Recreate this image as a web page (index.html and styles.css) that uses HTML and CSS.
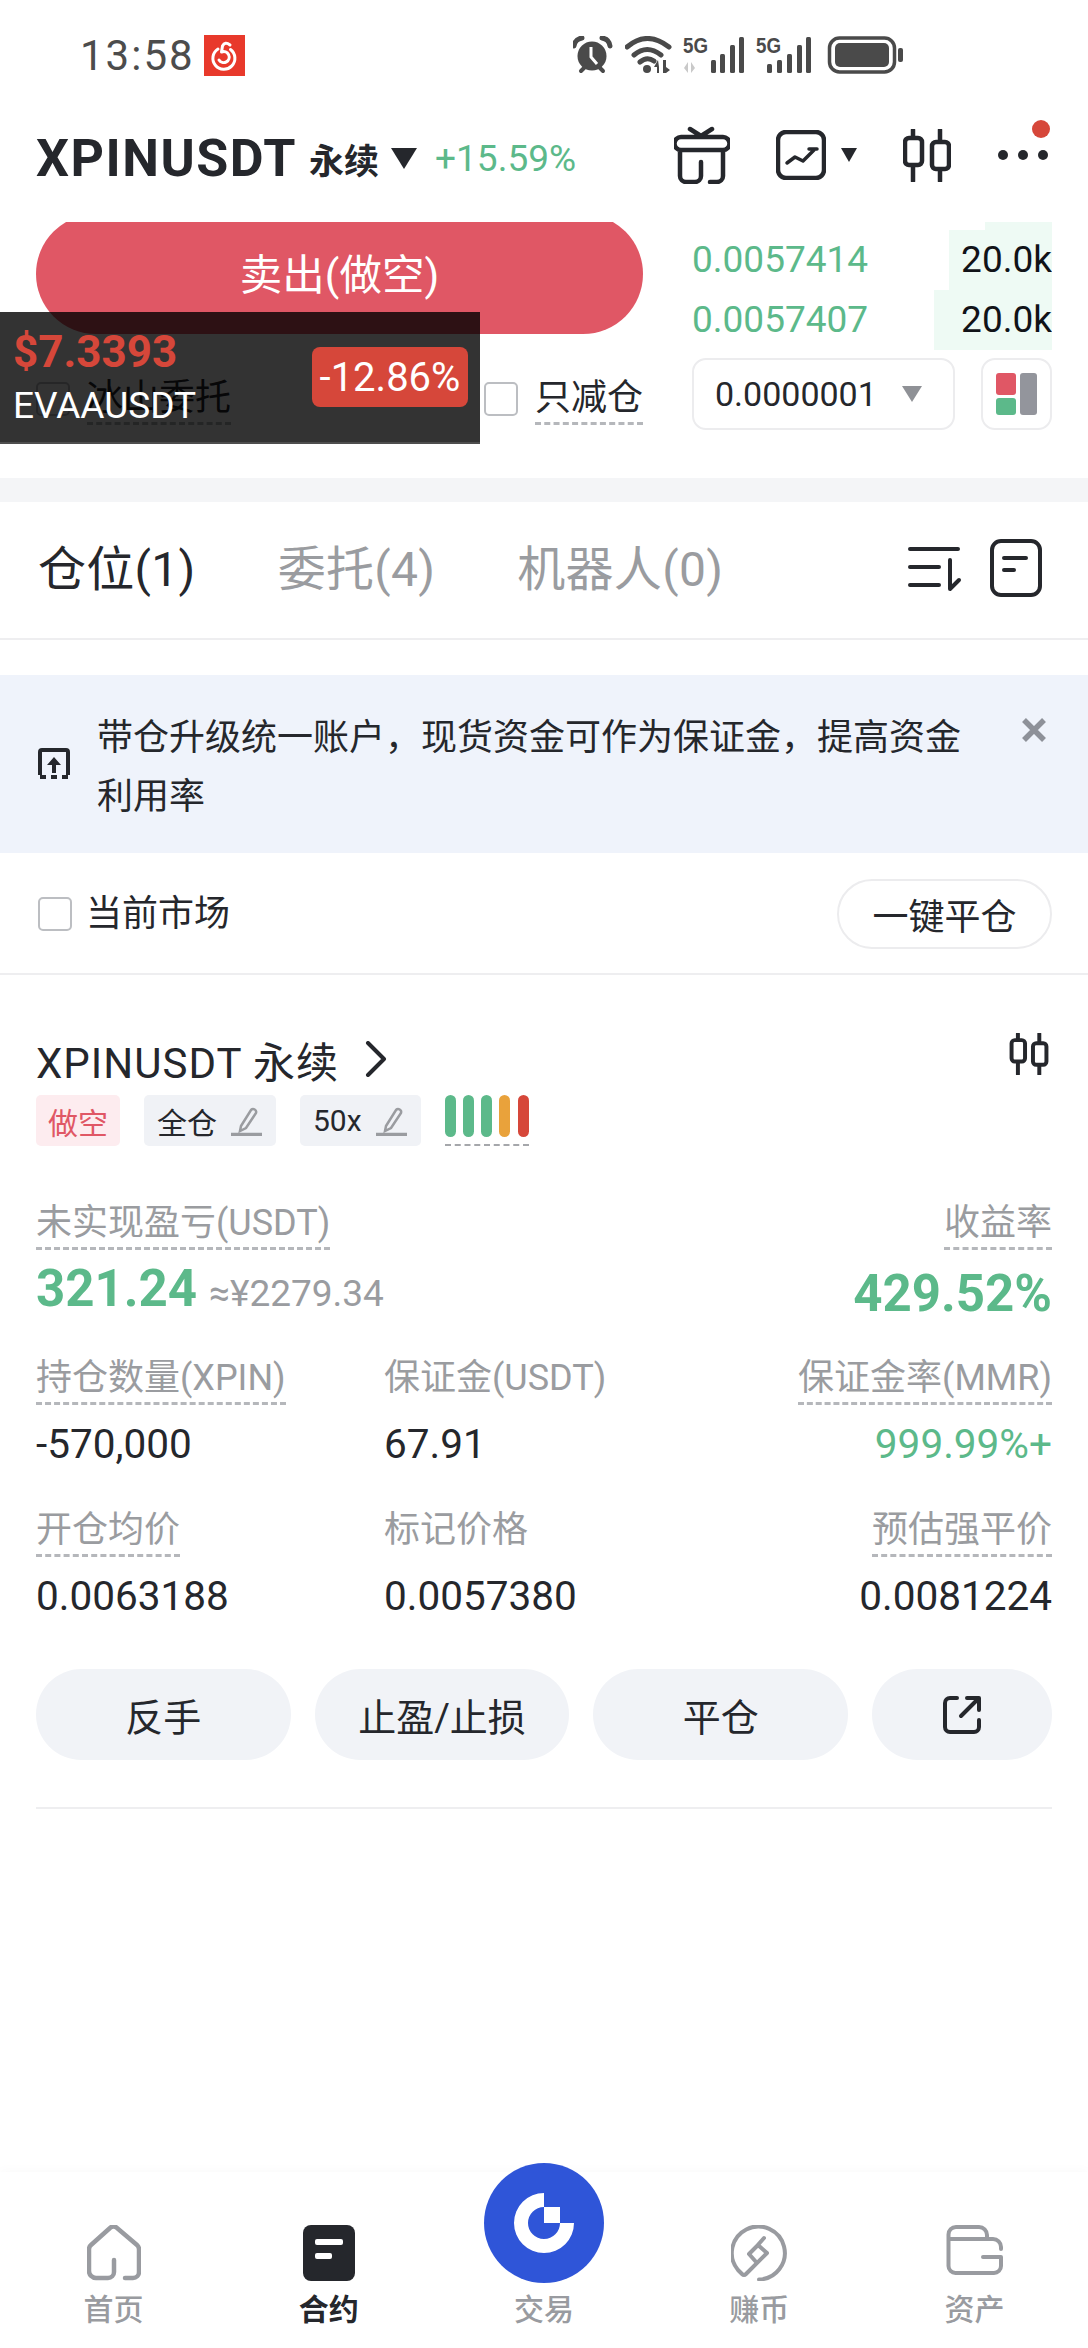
FILE: index.html
```html
<!DOCTYPE html>
<html lang="zh-CN">

<head>
    <meta charset="UTF-8">
    <meta name="viewport" content="width=device-width, initial-scale=1.0">
    <title>XPINUSDT 永续</title>
    <link rel="stylesheet" href="styles.css">
</head>

<body>
    <div class="page">
        <!-- 状态栏 -->
        <div class="status">
            <span class="status-time">13:58</span>
            <svg class="app-icon" width="41" height="41" viewBox="0 0 41 41">
                <rect width="41" height="41" fill="#e8392b" />
                <path d="M26 10Q21 6 18.500 11L17.500 17M14 14A11 11 0 1 0 26.500 14.500M17.500 17A5.500 5.500 0 1 1 15 25" fill="none" stroke="#fff" stroke-width="3" stroke-linecap="round" />
            </svg>
            <div class="status-icons">
                <svg width="41" height="38" viewBox="0 0 41 38">
                    <circle cx="19" cy="20" r="14.500" fill="#4a4a4a" />
                    <path d="M1 10Q2 3 9 2M37 10Q36 3 29 2" fill="none" stroke="#4a4a4a" stroke-width="5" stroke-linecap="round" />
                    <path d="M8 35l4-4M30 35l-4-4" stroke="#4a4a4a" stroke-width="4" stroke-linecap="round" />
                    <path d="M18 11V21L24 28" fill="none" stroke="#fff" stroke-width="3" />
                </svg>
                <svg width="47" height="38" viewBox="0 0 47 38">
                    <path d="M2 11Q22-6 44 11M9 19Q22 8 36 19M15 26Q22 20 29 25" fill="none" stroke="#4a4a4a" stroke-width="5" stroke-linecap="round" />
                    <circle cx="22" cy="33" r="4" fill="#4a4a4a" />
                    <path d="M33 24l-4 7h3v6h2v-6zM38 24h3v7l4 3-4 3h-3z" fill="#4a4a4a" />
                </svg>
                <svg width="62" height="50" viewBox="0 -6 62 50">
                    <text x="0" y="17" class="net-label" textLength="25" lengthAdjust="spacingAndGlyphs">5G</text>
                    <path d="M5 26l-4 6 4 5zM8 26l4 6-4 5z" fill="#c9c9c9" />
                    <g fill="#4a4a4a">
                        <rect x="28" y="24" width="5" height="13" rx="1.500" />
                        <rect x="37" y="18" width="5" height="19" rx="1.500" />
                        <rect x="47" y="9" width="5" height="28" rx="1.500" />
                        <rect x="56" y="1" width="5" height="36" rx="1.500" />
                    </g>
                </svg>
                <svg width="56" height="50" viewBox="0 -6 56 50">
                    <text x="0" y="17" class="net-label" textLength="25" lengthAdjust="spacingAndGlyphs">5G</text>
                    <g fill="#4a4a4a">
                        <rect x="11" y="28" width="5" height="9" rx="1.500" />
                        <rect x="21" y="24" width="5" height="13" rx="1.500" />
                        <rect x="31" y="18" width="5" height="19" rx="1.500" />
                        <rect x="41" y="9" width="5" height="28" rx="1.500" />
                        <rect x="50" y="1" width="5" height="36" rx="1.500" />
                    </g>
                </svg>
                <svg width="80" height="38" viewBox="0 0 80 38">
                    <rect x="6.500" y="2" width="65" height="34" rx="10" fill="none" stroke="#4a4a4a" stroke-width="3.500" />
                    <rect x="12" y="7" width="54" height="24" rx="5" fill="#4a4a4a" />
                    <rect x="75" y="12" width="5" height="14" rx="2" fill="#4a4a4a" />
                </svg>
            </div>
        </div>

        <!-- 标题栏 -->
        <div class="header">
            <span class="symbol">XPINUSDT</span>
            <span class="symbol-type">永续</span>
            <span class="tri tri-lg"></span>
            <span class="symbol-change">+15.59%</span>
            <div class="header-icons">
                <svg width="56" height="58" viewBox="0 0 56 58" class="ink-icon">
                    <path d="M16 3L27 10L38 3M7 11H49A5.500 5.500 0 0 1 49 24H7A5.500 5.500 0 0 1 7 11ZM6 24V50A6 6 0 0 0 12 56H21A6 6 0 0 0 27 50V36M36 56H43A6 6 0 0 0 49 50V24" />
                </svg>
                <svg width="50" height="50" viewBox="0 0 50 50" class="ink-icon chart-icon">
                    <rect x="2" y="2" width="46" height="46" rx="8" />
                    <path d="M11 33L19 27L27 31L38 20M33 19H41" />
                </svg>
                <span class="tri tri-sm"></span>
                <svg width="48" height="53" viewBox="0 0 48 53" class="ink-icon candle-icon">
                    <path d="M10 1V52M37 1V52" />
                    <rect x="2" y="9" width="17" height="27" rx="4" fill="#fff" />
                    <rect x="29" y="13" width="17" height="27" rx="4" fill="#fff" />
                </svg>
                <div class="more">
                    <span></span><span></span><span></span>
                    <i class="more-dot"></i>
                </div>
            </div>
        </div>

        <!-- 下单区 -->
        <div class="trade">
            <div class="trade-left">
                <div class="sell-clip">
                    <div class="sell-btn">卖出(做空)</div>
                </div>
                <div class="options">
                    <label class="check-row">
                        <span class="checkbox"></span>
                        <span class="dashed dark-text">冰山委托</span>
                    </label>
                    <label class="check-row">
                        <span class="checkbox"></span>
                        <span class="dashed dark-text">只减仓</span>
                    </label>
                </div>
            </div>
            <div class="trade-right">
                <div class="book">
                    <div class="book-row book-row-cut"><i class="depth" style="width:67px"></i></div>
                    <div class="book-row">
                        <i class="depth" style="width:103px"></i>
                        <span class="book-price">0.0057414</span>
                        <span class="book-size">20.0k</span>
                    </div>
                    <div class="book-row">
                        <i class="depth" style="width:118px"></i>
                        <span class="book-price">0.0057407</span>
                        <span class="book-size">20.0k</span>
                    </div>
                </div>
                <div class="book-tools">
                    <div class="precision">
                        <span>0.0000001</span>
                        <span class="tri tri-grey"></span>
                    </div>
                    <div class="layout-btn">
                        <svg width="41" height="42" viewBox="0 0 41 42">
                            <rect width="20" height="22" rx="3" fill="#e05765" />
                            <rect y="25" width="20" height="17" rx="3" fill="#5cb98a" />
                            <rect x="24" width="17" height="42" rx="3" fill="#93959c" />
                        </svg>
                    </div>
                </div>
            </div>
            <!-- 悬浮行情窗 -->
            <div class="float-ticker">
                <div class="float-info">
                    <div class="float-price">$7.3393</div>
                    <div class="float-name">EVAAUSDT</div>
                </div>
                <div class="float-badge">-12.86%</div>
            </div>
        </div>

        <div class="band"></div>

        <!-- 标签页 -->
        <div class="tabs">
            <span class="tab tab-active">仓位(1)</span>
            <span class="tab">委托(4)</span>
            <span class="tab">机器人(0)</span>
            <div class="tab-icons">
                <svg width="55" height="50" viewBox="0 0 55 50" class="ink-icon thin">
                    <path d="M3 6H51M3 24H32M3 42H32M43 17V46L52 37" />
                </svg>
                <svg width="52" height="58" viewBox="0 0 52 58" class="ink-icon thin">
                    <rect x="2" y="2" width="48" height="54" rx="9" />
                    <path d="M14 19H36M14 31H24" />
                </svg>
            </div>
        </div>

        <!-- 提示条 -->
        <div class="notice">
            <svg class="notice-icon" width="32" height="32" viewBox="0 0 32 32">
                <path d="M2 27V4A2 2 0 0 1 4 2H28A2 2 0 0 1 30 4V27" fill="none" stroke="#25272c" stroke-width="4" />
                <path d="M2 29H8M13 29H19M24 29H30" stroke="#25272c" stroke-width="4" />
                <path d="M16 9L9 17H14V25H18V17H23Z" fill="#25272c" />
            </svg>
            <p class="notice-text">带仓升级统一账户，现货资金可作为保证金，提高资金利用率</p>
            <svg class="notice-close" width="24" height="24" viewBox="0 0 24 24">
                <path d="M2 2L22 22M22 2L2 22" stroke="#8e9199" stroke-width="5.500" />
            </svg>
        </div>

        <div class="filter">
            <label class="check-row check-row-tight">
                <span class="checkbox"></span>
                <span class="dark-text">当前市场</span>
            </label>
            <div class="close-all">一键平仓</div>
        </div>

        <!-- 持仓卡片 -->
        <div class="position">
            <div class="pos-title">
                <span class="pos-name">XPINUSDT 永续</span>
                <svg width="22" height="36" viewBox="0 0 22 36" class="ink-icon thin">
                    <path d="M3 2L19 18L3 34" />
                </svg>
                <svg class="pos-chart" width="40" height="42" viewBox="0 0 48 53">
                    <path d="M10 1V52M37 1V52" fill="none" stroke="#25272c" stroke-width="5" stroke-linecap="round" />
                    <rect x="2" y="9" width="17" height="27" rx="4" fill="#fff" stroke="#25272c" stroke-width="5" />
                    <rect x="29" y="13" width="17" height="27" rx="4" fill="#fff" stroke="#25272c" stroke-width="5" />
                </svg>
            </div>
            <div class="pos-tags">
                <span class="tag tag-short">做空</span>
                <span class="tag">全仓
                    <svg width="33" height="30" viewBox="0 0 33 30" class="pencil">
                        <path d="M11 20L21 4A3 3 0 0 1 26 7L16 22L10 25Z" />
                        <path d="M1 28.500H32" />
                    </svg>
                </span>
                <span class="tag">50x
                    <svg width="33" height="30" viewBox="0 0 33 30" class="pencil">
                        <path d="M11 20L21 4A3 3 0 0 1 26 7L16 22L10 25Z" />
                        <path d="M1 28.500H32" />
                    </svg>
                </span>
                <div class="meter">
                    <i class="meter-green"></i><i class="meter-green"></i><i class="meter-green"></i><i class="meter-orange"></i><i class="meter-red"></i>
                </div>
            </div>

            <div class="pnl">
                <div>
                    <span class="label dashed">未实现盈亏(USDT)</span>
                    <div class="pnl-value">
                        <span class="pnl-main">321.24</span>
                        <span class="pnl-cny">≈¥2279.34</span>
                    </div>
                </div>
                <div class="align-right">
                    <span class="label dashed">收益率</span>
                    <div class="pnl-rate">429.52%</div>
                </div>
            </div>

            <div class="stats">
                <div>
                    <span class="label dashed">持仓数量(XPIN)</span>
                    <div class="stat-value">-570,000</div>
                </div>
                <div>
                    <span class="label plain">保证金(USDT)</span>
                    <div class="stat-value">67.91</div>
                </div>
                <div class="align-right">
                    <span class="label dashed">保证金率(MMR)</span>
                    <div class="stat-value green">999.99%+</div>
                </div>
                <div>
                    <span class="label dashed">开仓均价</span>
                    <div class="stat-value">0.0063188</div>
                </div>
                <div>
                    <span class="label plain">标记价格</span>
                    <div class="stat-value">0.0057380</div>
                </div>
                <div class="align-right">
                    <span class="label dashed">预估强平价</span>
                    <div class="stat-value">0.0081224</div>
                </div>
            </div>

            <div class="actions">
                <div class="action">反手</div>
                <div class="action">止盈/止损</div>
                <div class="action">平仓</div>
                <div class="action action-icon">
                    <svg width="38" height="38" viewBox="0 0 38 38" class="ink-icon thin">
                        <path d="M14 2H7A5 5 0 0 0 2 7V31A5 5 0 0 0 7 36H31A5 5 0 0 0 36 31V24M18 20L35 3M24 2H36V14" />
                    </svg>
                </div>
            </div>
            <div class="pos-line"></div>
        </div>

        <!-- 底部导航 -->
        <div class="nav">
            <div class="nav-item">
                <svg width="54" height="56" viewBox="0 0 54 56" class="nav-svg">
                    <path d="M27 35V47A6 6 0 0 1 21 53H9A7 7 0 0 1 2 46V24A6 6 0 0 1 4 20L23 3A5 5 0 0 1 30 3L50 20A6 6 0 0 1 52 24V47A6 6 0 0 1 46 53H38" />
                </svg>
                <span>首页</span>
            </div>
            <div class="nav-item nav-active">
                <svg width="52" height="56" viewBox="0 0 52 56">
                    <rect width="52" height="56" rx="8" fill="#25272c" />
                    <rect x="12" y="14" width="28" height="6" rx="2" fill="#fff" />
                    <rect x="12" y="28" width="17" height="6" rx="2" fill="#fff" />
                </svg>
                <span>合约</span>
            </div>
            <div class="nav-item nav-main">
                <svg class="nav-logo" width="120" height="120" viewBox="-60 -60 120 120">
                    <circle r="60" fill="#2f55d8" />
                    <path d="M0-30A30 30 0 1 0 30 0H16A16 16 0 1 1 0-16ZM0-16H16V0H0Z" fill="#fff" />
                </svg>
                <span>交易</span>
            </div>
            <div class="nav-item">
                <svg width="56" height="56" viewBox="0 0 56 56" class="nav-svg nav-svg-thin">
                    <path d="M28 54.500A26.500 26.500 0 1 0 7 45L11 49Q13 51 15 49L36 28L27 20L18 29L26 38M33 13L25 22" />
                </svg>
                <span>赚币</span>
            </div>
            <div class="nav-item">
                <svg width="57" height="56" viewBox="0 0 57 56" class="nav-svg nav-svg-thin">
                    <path d="M2.500 14H47A8 8 0 0 1 55 22V24M41 14V10A8 8 0 0 0 33 2H10A7.500 7.500 0 0 0 2.500 9.500V41A7 7 0 0 0 9.500 48H48A7 7 0 0 0 55 41V32H37" />
                </svg>
                <span>资产</span>
            </div>
        </div>
    </div>
</body>

</html>
```

FILE: styles.css
```css
* {
    box-sizing: border-box;
}

body {
    margin: 0;
    background: #fff;
    color: #25272c;
    font-family: Roboto, "Noto Sans CJK SC", sans-serif;
}

.page {
    width: 1088px;
    height: 2348px;
    display: flex;
    flex-direction: column;
    overflow: hidden;
}

/* 状态栏 */

.status {
    height: 110px;
    flex-shrink: 0;
    display: flex;
    align-items: center;
    padding: 0 185px 0 80px;
}

.status-time {
    font-size: 42px;
    letter-spacing: 2px;
    color: #4c4c4c;
}

.app-icon {
    margin-left: 9px;
}

.status-icons {
    margin-left: auto;
    display: flex;
    align-items: center;
    gap: 11px;
}

.net-label {
    font-family: "Liberation Sans", sans-serif;
    font-size: 22px;
    font-weight: 700;
    fill: #4a4a4a;
}

/* 标题栏 */

.header {
    height: 112px;
    flex-shrink: 0;
    display: flex;
    align-items: center;
    padding: 0 36px 22px;
}

.symbol {
    font-size: 52px;
    font-weight: 700;
    letter-spacing: 1.500px;
    margin-top: 6px;
}

.symbol-type {
    font-size: 35px;
    font-weight: 700;
    margin-left: 12px;
    margin-top: 6px;
}

.symbol-change {
    font-size: 37px;
    color: #5cb98a;
    margin-left: 18px;
    margin-top: 6px;
}

.tri {
    display: inline-block;
    width: 0;
    height: 0;
    border-style: solid;
    border-color: #25272c transparent transparent;
}

.tri-lg {
    border-width: 21px 13px 0;
    margin-left: 12px;
    margin-top: 6px;
}

.tri-sm {
    border-width: 14px 8px 0;
    margin-left: -7px;
}

.tri-grey {
    border-width: 16px 10px 0;
    border-top-color: #8f9196;
}

.header-icons {
    margin-left: auto;
    display: flex;
    align-items: center;
    gap: 22px;
    margin-right: 4px;
}

.ink-icon {
    fill: none;
    stroke: #25272c;
    stroke-width: 4.500px;
    stroke-linecap: round;
    stroke-linejoin: round;
}

.ink-icon.thin {
    stroke-width: 4px;
}

.chart-icon {
    margin-left: 24px;
}

.chart-icon path {
    stroke-width: 3.500px;
}

.candle-icon {
    margin-left: 24px;
}

.more {
    position: relative;
    display: flex;
    gap: 10px;
    margin-left: 25px;
}

.more span {
    width: 10px;
    height: 10px;
    border-radius: 50%;
    background: #25272c;
}

.more-dot {
    position: absolute;
    top: -30px;
    right: -2px;
    width: 18px;
    height: 18px;
    border-radius: 50%;
    background: #d6473a;
}

/* 下单区 */

.trade {
    position: relative;
    height: 256px;
    flex-shrink: 0;
    display: flex;
    padding-left: 36px;
}

.trade-left {
    width: 607px;
}

.sell-clip {
    height: 112px;
    overflow: hidden;
}

.sell-btn {
    height: 120px;
    margin-top: -8px;
    padding-bottom: 5px;
    border-radius: 60px;
    background: #e05765;
    color: #fff;
    font-size: 42.500px;
    display: flex;
    align-items: center;
    justify-content: center;
}

.options {
    height: 82px;
    margin-top: 24px;
    display: flex;
    align-items: center;
    justify-content: space-between;
}

.check-row {
    display: flex;
    align-items: center;
    gap: 17px;
}

.check-row-tight {
    gap: 14px;
}

.checkbox {
    width: 34px;
    height: 34px;
    border: 2.500px solid #bcbec2;
    border-radius: 5px;
    background: #fff;
}

.dark-text {
    font-size: 36px;
    line-height: 48px;
    color: #25272c;
}

.dashed {
    display: inline-block;
    border-bottom: 3px dashed #b5b7bb;
}

.plain {
    display: inline-block;
    border-bottom: 3px solid transparent;
}

.trade-right {
    width: 360px;
    margin-left: 49px;
}

.book {
    height: 136px;
    overflow: hidden;
}

.book-row {
    position: relative;
    height: 60px;
    padding-bottom: 2px;
    display: flex;
    align-items: center;
    justify-content: space-between;
    font-size: 37px;
}

.book-row-cut {
    height: 8px;
    padding-bottom: 0;
}

.depth {
    position: absolute;
    top: 0;
    right: 0;
    bottom: 0;
    background: #eefaf4;
}

.book-price {
    position: relative;
    color: #5cb98a;
}

.book-size {
    position: relative;
    color: #111318;
}

.book-tools {
    display: flex;
    gap: 26px;
}

.precision {
    width: 263px;
    height: 72px;
    display: flex;
    align-items: center;
    justify-content: space-between;
    padding: 0 31px 0 21px;
    border: 2.500px solid #ececee;
    border-radius: 14px;
    font-size: 34px;
}

.layout-btn {
    width: 71px;
    height: 72px;
    display: flex;
    align-items: center;
    justify-content: center;
    border: 2.500px solid #ececee;
    border-radius: 14px;
}

.float-ticker {
    position: absolute;
    left: 0;
    top: 90px;
    width: 480px;
    height: 132px;
    display: flex;
    justify-content: space-between;
    padding: 16px 12px 0 13px;
    background: rgba(0, 0, 0, 0.8);
    border-bottom: 2px solid #4e4e4e;
}

.float-price {
    font-size: 44px;
    font-weight: 700;
    line-height: 48px;
    color: #d6473a;
}

.float-name {
    font-size: 37px;
    line-height: 44px;
    margin-top: 8px;
    color: #fff;
}

.float-badge {
    width: 156px;
    height: 60px;
    margin-top: 19px;
    border-radius: 8px;
    background: #d6473a;
    color: #fff;
    font-size: 40px;
    display: flex;
    align-items: center;
    justify-content: center;
}

.band {
    height: 24px;
    flex-shrink: 0;
    background: #f4f5f7;
}

/* 标签页 */

.tabs {
    height: 138px;
    flex-shrink: 0;
    display: flex;
    align-items: center;
    gap: 82px;
    padding: 0 46px 4px 38px;
    border-bottom: 2px solid #eeeef0;
}

.tab {
    font-size: 48px;
    letter-spacing: 0.300px;
    color: #9a9ca0;
    margin-bottom: 6px;
}

.tab-active {
    color: #25272c;
}

.tab-icons {
    margin-left: auto;
    display: flex;
    align-items: center;
    gap: 28px;
}

/* 提示条 */

.notice {
    height: 178px;
    flex-shrink: 0;
    margin-top: 35px;
    display: flex;
    align-items: center;
    padding-left: 38px;
    background: #eff3fb;
}

.notice-icon {
    flex-shrink: 0;
}

.notice-text {
    width: 880px;
    margin: 8px 0 0 27px;
    font-size: 36px;
    line-height: 59px;
}

.notice-close {
    align-self: flex-start;
    margin: 43px 0 0 45px;
}

.filter {
    height: 122px;
    flex-shrink: 0;
    display: flex;
    align-items: center;
    justify-content: space-between;
    padding: 2px 36px 0 38px;
    border-bottom: 2px solid #eeeef0;
}

.close-all {
    width: 215px;
    height: 70px;
    border: 2.500px solid #ececee;
    border-radius: 35px;
    font-size: 36px;
    display: flex;
    align-items: center;
    justify-content: center;
}

/* 持仓卡片 */

.position {
    padding: 60px 36px 0;
}

.pos-title {
    height: 48px;
    display: flex;
    align-items: center;
}

.pos-name {
    font-size: 42px;
    letter-spacing: 1px;
}

.pos-title .thin {
    margin-left: 26px;
}

.pos-chart {
    margin-left: auto;
    margin-top: -10px;
    margin-right: 3px;
}

.pos-tags {
    height: 51px;
    margin-top: 12px;
    display: flex;
    gap: 24px;
}

.tag {
    height: 51px;
    padding: 0 13px;
    display: flex;
    align-items: center;
    gap: 13px;
    border-radius: 5px;
    background: #f0f2f6;
    color: #25272c;
    font-size: 30px;
}

.tag-short {
    padding: 0 12px;
    background: #fdecef;
    color: #e05765;
}

.pencil {
    fill: none;
    stroke: #9a9ca0;
    stroke-width: 2.500px;
}

.pencil path:last-child {
    stroke-width: 3.500px;
}

.meter {
    width: 84px;
    height: 51px;
    display: flex;
    justify-content: space-between;
    align-items: flex-start;
    border-bottom: 2px dashed #a5a7ab;
}

.meter i {
    width: 11px;
    height: 42px;
    border-radius: 6px;
}

.meter-green {
    background: #5cb98a;
}

.meter-orange {
    background: #e9a23b;
}

.meter-red {
    background: #d6473a;
}

.label {
    font-size: 36px;
    line-height: 48px;
    color: #9a9ca0;
}

.align-right {
    text-align: right;
}

.pnl {
    display: flex;
    justify-content: space-between;
    margin-top: 53px;
}

.pnl-value {
    display: flex;
    align-items: center;
    height: 60px;
    margin-top: 8px;
}

.pnl-main {
    font-size: 51px;
    font-weight: 700;
    color: #5cb98a;
}

.pnl-cny {
    font-size: 37px;
    color: #9a9ca0;
    margin-left: 12px;
    padding-top: 10px;
}

.pnl-rate {
    height: 60px;
    line-height: 60px;
    margin-top: 14px;
    font-size: 51px;
    font-weight: 700;
    color: #5cb98a;
}

.stats {
    display: grid;
    grid-template-columns: 348px 1fr 1fr;
    row-gap: 38px;
    margin-top: 30px;
}

.stat-value {
    font-size: 40.500px;
    line-height: 48px;
    margin-top: 15px;
}

.green {
    color: #5cb98a;
}

.actions {
    display: flex;
    gap: 24px;
    margin-top: 49px;
}

.action {
    flex: 1;
    height: 91px;
    border-radius: 46px;
    background: #f1f3f7;
    font-size: 38px;
    display: flex;
    align-items: center;
    justify-content: center;
}

.action-icon {
    flex: 0 0 180px;
}

.pos-line {
    height: 2px;
    margin-top: 47px;
    background: #eeeef0;
}

/* 底部导航 */

.nav {
    height: 176px;
    flex-shrink: 0;
    margin-top: auto;
    display: flex;
    padding: 53px 6px 0;
    box-shadow: 0 -3px 10px rgba(0, 0, 0, 0.018);
}

.nav-item {
    flex: 1;
    display: flex;
    flex-direction: column;
    align-items: center;
    font-size: 30px;
    font-weight: 500;
    line-height: 40px;
    color: #999ba0;
}

.nav-item span {
    margin-top: 9px;
}

.nav-active {
    color: #25272c;
    font-weight: 700;
}

.nav-main span {
    margin-top: 7px;
}

.nav-logo {
    margin-top: -62px;
    flex-shrink: 0;
}

.nav-svg {
    fill: none;
    stroke: #999ba0;
    stroke-width: 4.500px;
    stroke-linecap: round;
    stroke-linejoin: round;
}

.nav-svg-thin {
    stroke-width: 4px;
}
```
